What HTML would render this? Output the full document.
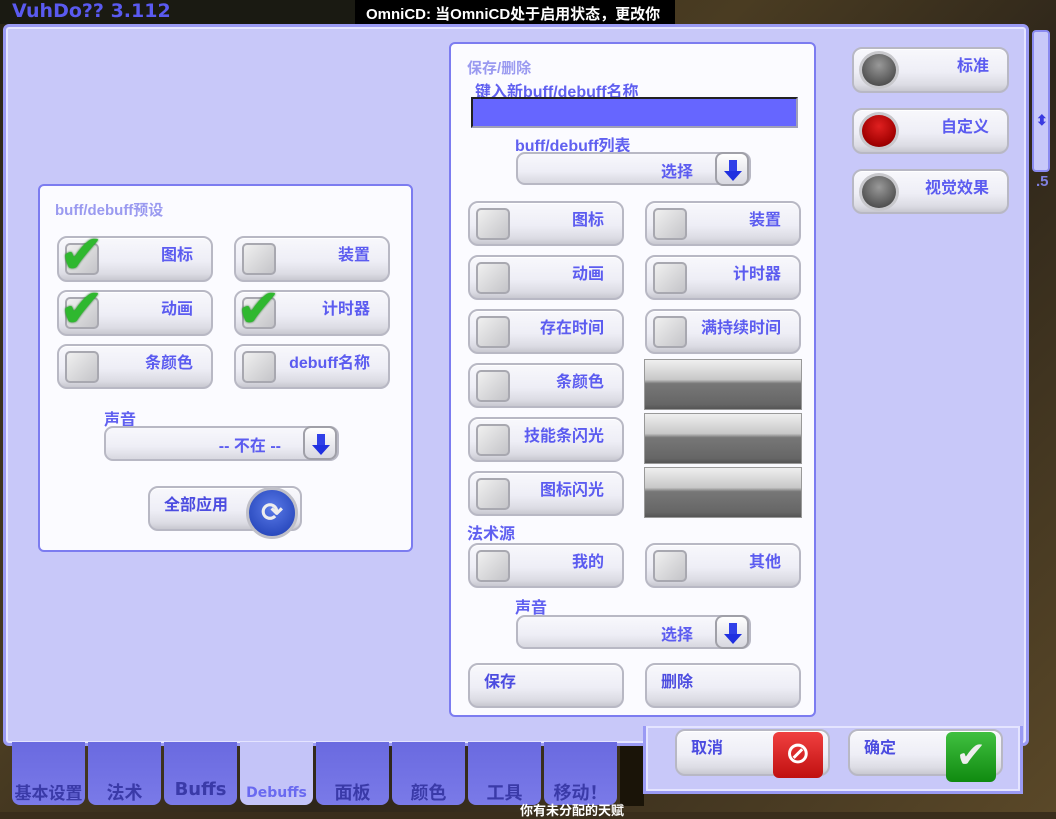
<!DOCTYPE html>
<html><head><meta charset="utf-8"><style>
*{box-sizing:border-box;margin:0;padding:0}
body{width:1056px;height:812px;overflow:hidden;position:relative;background:#3a2e1c;font-family:"Liberation Sans","Noto Sans CJK SC",sans-serif;font-weight:bold}
.a{position:absolute}
.bg{background:linear-gradient(135deg,#2a2416,#4a3c22 40%,#2e261a 60%,#5a4828)}
.frame{left:3px;top:24px;width:1026px;height:722px;background:#c8c8f9;border:3px solid #9a9af4;border-radius:6px;box-shadow:inset 0 0 0 2px #e4e4ff}
.panel{background:#fbfbff;border:2px solid #7c7cf0;border-radius:6px}
.btn{border-radius:10px;border:2px solid #b8b8c4;background:linear-gradient(#f8f8fc 0%,#eeeef6 55%,#dcdce4 85%,#c8c8d0 100%);color:#5c5cf0;font-size:16px;text-align:right;padding:3px 18px 0 0;box-shadow:inset 0 1px 0 #fff}
.sq{position:absolute;left:6px;top:5px;width:34px;height:32px;border:2px solid #a8a8b0;border-radius:5px;background:linear-gradient(135deg,#f0f0f0,#c4c4c8)}
.lbl{color:#6060f0;font-size:16px}
.ttl{color:#9a9af0;font-size:15px}
.sw{background:linear-gradient(#efefef 0%,#c8c8c8 40%,#777 48%,#666 90%,#555 100%);border:1px solid #999}
.dd{border-radius:9px;border:2px solid #b8b8c4;background:linear-gradient(#f8f8fc,#eeeef6 60%,#d8d8e0);color:#5c5cf0;font-size:16px;text-align:right;padding:4px 56px 0 0}
.arr{position:absolute;right:0;top:-2px;width:34px;height:34px;border:2px solid #a0a0a8;border-radius:8px;background:linear-gradient(#fff,#d8d8e0)}
.arr:after{content:"";position:absolute;left:7px;top:17px;border-left:9px solid transparent;border-right:9px solid transparent;border-top:10px solid #2030e0}
.arr:before{content:"";position:absolute;left:12px;top:6px;width:8px;height:12px;background:#3040e8}
.tab{top:742px;width:73px;height:63px;background:linear-gradient(#6a6ae0,#7a7ae8);border-radius:0 0 8px 8px;color:#3a3aa8;font-size:18px;text-align:center;padding-top:37px}
.ck{position:absolute;left:0;top:-10px;font-size:54px;color:#2fb82f;line-height:54px;text-shadow:0 0 2px #0a6a0a;font-family:"DejaVu Sans",sans-serif}
.rb{position:absolute;left:5px;top:2px;width:40px;height:38px;border-radius:50%;border:3px solid #c8c8cc;background:radial-gradient(circle at 50% 35%,#999,#555 70%,#333)}
</style></head><body>
<div class="a bg" style="left:0;top:0;width:1056px;height:812px"></div>
<div class="a" style="left:0;top:0;width:355px;height:24px;background:#1a1a12"></div>
<div class="a" style="left:12px;top:0;color:#5a5af0;font-size:19px;font-family:'DejaVu Sans',sans-serif">VuhDo?? 3.112</div>
<div class="a" style="left:355px;top:0;width:320px;height:24px;background:#000;color:#fff;font-size:15px;padding:3px 0 0 11px;white-space:nowrap;overflow:hidden">OmniCD: 当OmniCD处于启用状态，更改你</div>
<div class="a frame"></div>
<div class="a" style="left:1032px;top:30px;width:18px;height:142px;background:#c8c8f9;border:2px solid #8a8af0;border-radius:4px"></div>
<div class="a" style="left:1036px;top:112px;color:#3a3ae0;font-size:14px">⬍</div>
<div class="a" style="left:1036px;top:173px;color:#8080e0;font-size:15px">.5</div>

<div class="a panel" style="left:38px;top:184px;width:375px;height:368px"></div>
<div class="a ttl" style="left:55px;top:199px">buff/debuff预设</div>
<div class="a btn" style="left:57px;top:236px;width:156px;height:46px">图标<div class="sq"></div><div class="ck">✔</div></div>
<div class="a btn" style="left:234px;top:236px;width:156px;height:46px">装置<div class="sq"></div></div>
<div class="a btn" style="left:57px;top:290px;width:156px;height:46px">动画<div class="sq"></div><div class="ck">✔</div></div>
<div class="a btn" style="left:234px;top:290px;width:156px;height:46px">计时器<div class="sq"></div><div class="ck">✔</div></div>
<div class="a btn" style="left:57px;top:344px;width:156px;height:45px">条颜色<div class="sq"></div></div>
<div class="a btn" style="left:234px;top:344px;width:156px;height:45px">debuff名称<div class="sq"></div></div>
<div class="a lbl" style="left:104px;top:406px">声音</div>
<div class="a dd" style="left:104px;top:426px;width:235px;height:35px">-- 不在 --<div class="arr"></div></div>
<div class="a btn" style="left:148px;top:486px;width:154px;height:45px;text-align:left;padding-left:14px;color:#4c4ce0">全部应用<div class="a" style="left:96px;top:-1px;width:52px;height:52px;border-radius:50%;border:3px solid #c0c0c8;background:radial-gradient(circle at 50% 40%,#5a7ae8,#1a3ab0);color:#eee;font-size:26px;text-align:center;line-height:44px">⟳</div></div>

<div class="a panel" style="left:449px;top:42px;width:367px;height:675px"></div>
<div class="a ttl" style="left:467px;top:57px">保存/删除</div>
<div class="a lbl" style="left:475px;top:78px">键入新buff/debuff名称</div>
<div class="a" style="left:471px;top:97px;width:327px;height:31px;background:#6666ff;border:2px solid #a0a0b8;border-left-color:#222;border-top-color:#222"></div>
<div class="a lbl" style="left:515px;top:132px">buff/debuff列表</div>
<div class="a dd" style="left:516px;top:152px;width:235px;height:33px">选择<div class="arr"></div></div>
<div class="a btn" style="left:468px;top:201px;width:156px;height:45px">图标<div class="sq"></div></div>
<div class="a btn" style="left:645px;top:201px;width:156px;height:45px">装置<div class="sq"></div></div>
<div class="a btn" style="left:468px;top:255px;width:156px;height:45px">动画<div class="sq"></div></div>
<div class="a btn" style="left:645px;top:255px;width:156px;height:45px">计时器<div class="sq"></div></div>
<div class="a btn" style="left:468px;top:309px;width:156px;height:45px">存在时间<div class="sq"></div></div>
<div class="a btn" style="left:645px;top:309px;width:156px;height:45px">满持续时间<div class="sq"></div></div>
<div class="a btn" style="left:468px;top:363px;width:156px;height:45px">条颜色<div class="sq"></div></div>
<div class="a btn" style="left:468px;top:417px;width:156px;height:45px">技能条闪光<div class="sq"></div></div>
<div class="a btn" style="left:468px;top:471px;width:156px;height:45px">图标闪光<div class="sq"></div></div>
<div class="a sw" style="left:644px;top:359px;width:158px;height:51px"></div>
<div class="a sw" style="left:644px;top:413px;width:158px;height:51px"></div>
<div class="a sw" style="left:644px;top:467px;width:158px;height:51px"></div>
<div class="a lbl" style="left:467px;top:520px">法术源</div>
<div class="a btn" style="left:468px;top:543px;width:156px;height:45px">我的<div class="sq"></div></div>
<div class="a btn" style="left:645px;top:543px;width:156px;height:45px">其他<div class="sq"></div></div>
<div class="a lbl" style="left:515px;top:594px">声音</div>
<div class="a dd" style="left:516px;top:615px;width:235px;height:34px">选择<div class="arr"></div></div>
<div class="a btn" style="left:468px;top:663px;width:156px;height:45px;text-align:left;padding-left:14px;color:#4c4ce0">保存</div>
<div class="a btn" style="left:645px;top:663px;width:156px;height:45px;text-align:left;padding-left:14px;color:#4c4ce0">删除</div>

<div class="a btn" style="left:852px;top:47px;width:157px;height:46px">标准<div class="rb"></div></div>
<div class="a btn" style="left:852px;top:108px;width:157px;height:46px">自定义<div class="rb" style="background:radial-gradient(circle at 50% 35%,#e02020,#a00000 70%,#600)"></div></div>
<div class="a btn" style="left:852px;top:169px;width:157px;height:45px">视觉效果<div class="rb"></div></div>

<div class="a tab" style="left:12px;font-size:17px">基本设置</div>
<div class="a tab" style="left:88px">法术</div>
<div class="a tab" style="left:164px;font-family:'DejaVu Sans',sans-serif">Buffs</div>
<div class="a tab" style="left:240px;background:#c4c4f8;color:#6a6af0;font-size:14px;padding-top:43px;font-family:'DejaVu Sans',sans-serif">Debuffs</div>
<div class="a tab" style="left:316px">面板</div>
<div class="a tab" style="left:392px">颜色</div>
<div class="a tab" style="left:468px">工具</div>
<div class="a tab" style="left:544px">移动！</div>
<div class="a" style="left:620px;top:746px;width:24px;height:60px;background:#1a1408"></div>
<div class="a" style="left:520px;top:800px;color:#fff;font-size:13px">你有未分配的天赋</div>

<div class="a" style="left:643px;top:726px;width:380px;height:68px;background:#c8c8f9;border:3px solid #9a9af4;border-top:none;box-shadow:inset 0 0 0 2px #e4e4ff"></div>
<div class="a btn" style="left:675px;top:729px;width:155px;height:47px;text-align:left;padding-left:14px;color:#4c4ce0">取消<div class="a" style="left:96px;top:1px;width:50px;height:46px;border-radius:6px;background:linear-gradient(#f04040,#c01010);color:#fff;font-size:30px;text-align:center;line-height:44px;font-family:'DejaVu Sans',sans-serif">⊘</div></div>
<div class="a btn" style="left:848px;top:729px;width:155px;height:47px;text-align:left;padding-left:14px;color:#4c4ce0">确定<div class="a" style="left:96px;top:1px;width:50px;height:50px;border-radius:6px;background:linear-gradient(#40c040,#108a10);color:#eee;font-size:36px;text-align:center;line-height:48px;font-family:'DejaVu Sans',sans-serif">✔</div></div>
</body></html>
